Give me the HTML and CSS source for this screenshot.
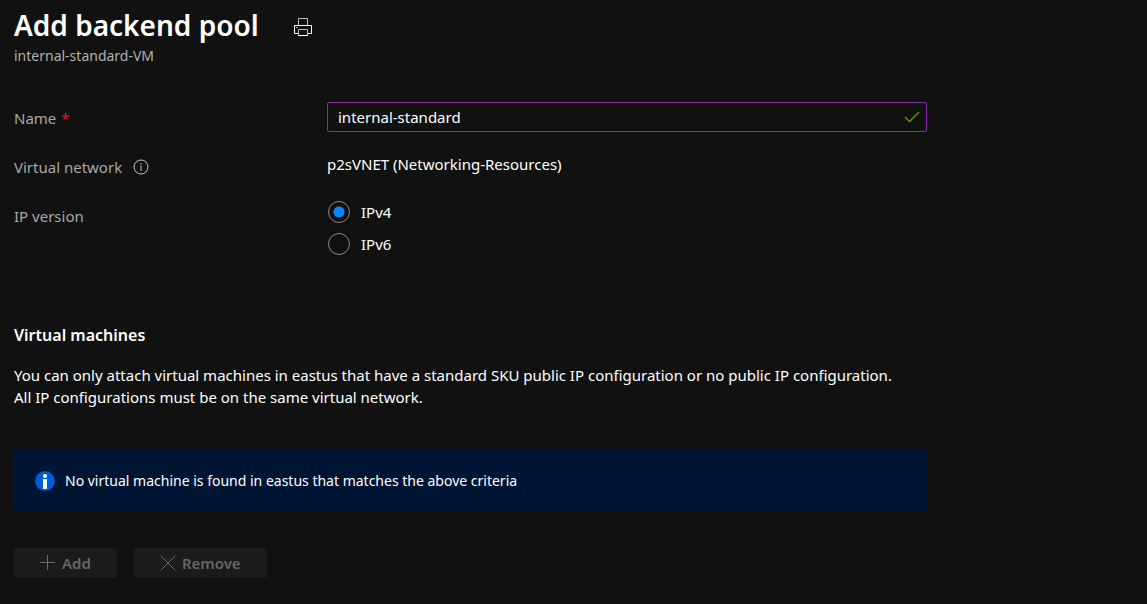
FILE: index.html
```
<!DOCTYPE html>
<html lang="en">
<head>
    <meta charset="UTF-8">
    <meta name="viewport" content="width=device-width, initial-scale=1.0">
    <title>Add backend pool</title>
    <link rel="stylesheet" href="styles.css">
</head>
<body>
    <header>
        <div class="title">
            <h1>Add backend pool</h1>
            <button type="button" class="print" aria-label="Print">
                <svg width="20" height="20" viewBox="0 0 20 20" fill="none" stroke="#fff">
                    <path d="M5.500 8V1.500H14.500V8" stroke="#bbb"/>
                    <path d="M5 16.500H1.500V8.500H18.500V16.500H15"/>
                    <path d="M5.500 18V12.500H14.500V18" stroke="#bbb"/>
                    <path d="M5 18.500H15"/>
                    <path d="M3 10.500H5" stroke="#aaa"/>
                </svg>
            </button>
        </div>
        <p class="subtitle">internal-standard-VM</p>
    </header>

    <form>
        <div class="row">
            <label class="label" for="name">Name <span class="required">*</span></label>
            <div class="field">
                <input type="text" id="name" value="internal-standard" required>
                <svg class="check" width="16" height="12" viewBox="0 0 16 12" fill="none" stroke="#57a300" stroke-width="1.3">
                    <path d="M1 6L5.500 10.500L15 1"/>
                </svg>
            </div>
        </div>
        <div class="row">
            <div class="label">Virtual network
                <svg class="info" width="16" height="16" viewBox="0 0 16 16" fill="none" stroke="#c8c8c8">
                    <circle cx="8" cy="8" r="7"/>
                    <path d="M8 4V5.500M8 6.500V12"/>
                </svg>
            </div>
            <p class="value">p2sVNET (Networking-Resources)</p>
        </div>
        <div class="row" role="radiogroup" aria-labelledby="ipversion">
            <div class="label" id="ipversion">IP version</div>
            <div class="radios">
                <label><input type="radio" name="ip" value="4" checked>IPv4</label>
                <label><input type="radio" name="ip" value="6">IPv6</label>
            </div>
        </div>

        <h2>Virtual machines</h2>
        <p class="text">You can only attach virtual machines in eastus that have a standard SKU public IP configuration or no public IP configuration.<br>All IP configurations must be on the same virtual network.</p>

        <div class="message">
            <svg width="20" height="20" viewBox="0 0 20 20">
                <circle cx="10" cy="10" r="10" fill="#015cda"/>
                <circle cx="10" cy="5" r="2" fill="#fff"/>
                <rect x="8" y="8" width="4" height="10" fill="#fff"/>
            </svg>
            <p>No virtual machine is found in eastus that matches the above criteria</p>
        </div>

        <div class="buttons">
            <button type="button" disabled>
                <svg width="16" height="16" viewBox="0 0 16 16" fill="none" stroke="#6a6a6a">
                    <path d="M7.500 0V15M0 7.500H15"/>
                </svg>
                Add
            </button>
            <button type="button" disabled>
                <svg width="16" height="16" viewBox="0 0 16 16" fill="none" stroke="#6a6a6a">
                    <path d="M0.500 0.500L15.500 15.500M15.500 0.500L0.500 15.500"/>
                </svg>
                Remove
            </button>
        </div>
    </form>
</body>
</html>
```
FILE: styles.css
```
* {
    padding: 0;
    margin: 0;
    box-sizing: border-box;
}
body {
    background-color: #111;
    color: #fff;
    font-family: "Noto Sans", "Open Sans", sans-serif;
    font-size: 15px;
    line-height: 22px;
    padding: 8px 14px;
}
.title {
    display: flex;
    align-items: center;
    gap: 34px;
}
h1 {
    font-size: 28px;
    font-weight: 600;
    line-height: 34px;
}
.print {
    display: flex;
    padding-top: 4px;
    border: none;
    background: none;
}
.subtitle {
    margin-top: 2px;
    color: #b0b0b0;
    font-size: 14px;
    line-height: 24px;
}
form {
    max-width: 914px;
    padding-top: 34px;
}
.row {
    display: grid;
    grid-template-columns: 313px minmax(0, 600px);
    align-items: start;
}
.row + .row {
    margin-top: 17px;
}
.label {
    display: flex;
    align-items: center;
    gap: 11px;
    color: #a8a8a8;
    line-height: 32px;
}
.required {
    color: #e3122a;
    margin-left: -6px;
}
.field {
    position: relative;
}
.field input {
    display: block;
    width: 100%;
    height: 30px;
    padding: 0 36px 0 10px;
    border: 1px solid #8a2da5;
    border-radius: 2px;
    background-color: #111;
    color: #fff;
    font: inherit;
    outline: none;
}
.check {
    position: absolute;
    right: 7px;
    top: 9px;
}
.value {
    line-height: 26px;
}
.radios {
    margin-top: -4px;
}
.radios label {
    display: flex;
    align-items: center;
    gap: 11px;
    height: 32px;
}
.radios input {
    appearance: none;
    width: 22px;
    height: 22px;
    margin-left: 1px;
    border: 1px solid #8a8886;
    border-radius: 50%;
}
.radios input:checked {
    background: radial-gradient(circle, #0a84ff 5px, transparent 6px);
}
h2 {
    margin-top: 63px;
    font-size: 16px;
    font-weight: 600;
    line-height: 24px;
}
.text {
    margin-top: 17px;
}
.message {
    display: flex;
    align-items: center;
    gap: 10px;
    margin-top: 41px;
    padding: 21px 21px 19px;
    border-radius: 2px;
    background-color: #001433;
    font-size: 14px;
}
.buttons {
    display: flex;
    gap: 17px;
    margin-top: 37px;
}
.buttons button {
    display: flex;
    align-items: center;
    gap: 6px;
    height: 30px;
    padding: 0 26px;
    border: none;
    border-radius: 2px;
    background-color: #1b1b1b;
    color: #666;
    font: inherit;
    font-weight: 600;
}
```
